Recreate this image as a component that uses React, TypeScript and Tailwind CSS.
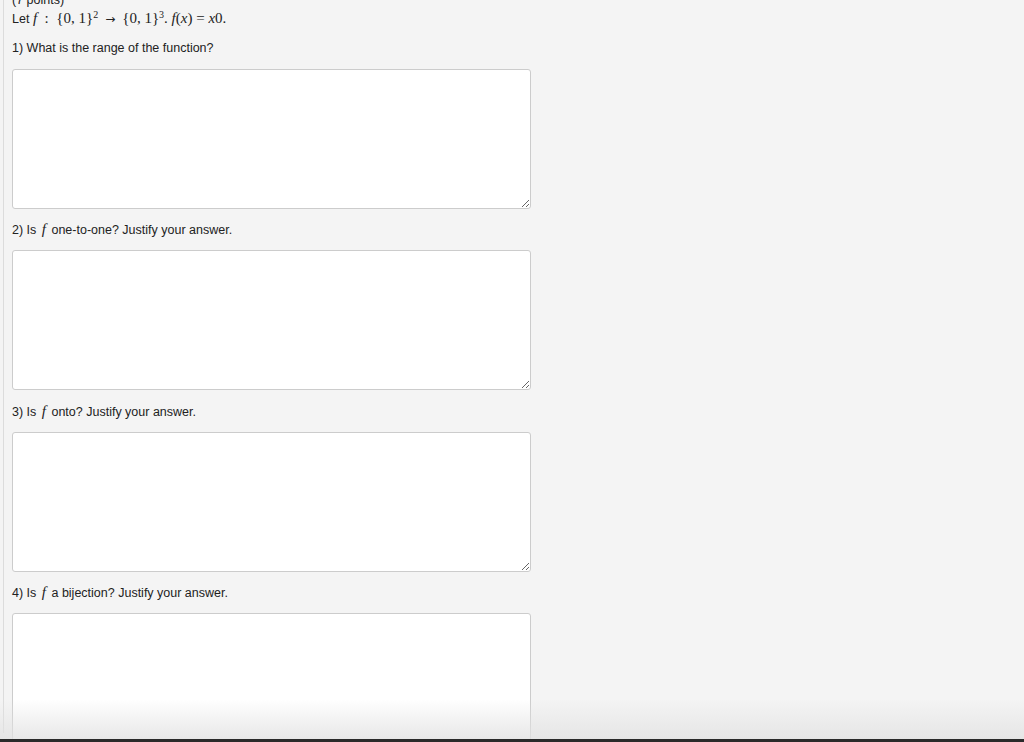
import React from 'react';

const questions = [
  { n: 1, before: 'What is the range of the function?', f: false, after: '', gap: 'mt-[12px]' },
  { n: 2, before: 'Is', f: true, after: 'one-to-one? Justify your answer.', gap: 'mt-[11px]' },
  { n: 3, before: 'Is', f: true, after: 'onto? Justify your answer.', gap: 'mt-[12px]' },
  { n: 4, before: 'Is', f: true, after: 'a bijection? Justify your answer.', gap: 'mt-[11px]' },
];

const serif = { fontFamily: '"Liberation Serif", "DejaVu Serif", serif' };

function F() {
  return (
    <span className="mx-[2px] italic text-[15px]" style={serif}>
      f
    </span>
  );
}

export default function App() {
  return (
    <div className="relative h-[742px] w-[1024px] overflow-hidden bg-[#f4f4f4] text-[#222]" style={{ fontFamily: '"Liberation Sans", Arial, sans-serif' }}>
      <div className="ml-[3px] h-full border-l border-[#dcdcdc] pl-[8px]">
        <div className="-mt-[9px] h-[18px] text-[12.5px] leading-[18px]">(7 points)</div>
        <div className="h-[18px] whitespace-nowrap text-[12.5px] leading-[18px]">
          Let{' '}
          <span className="text-[15px]" style={serif}>
            <i>f</i>&nbsp;&nbsp;:&nbsp;&nbsp;{'{'}0, 1{'}'}<sup className="text-[10px]">2</sup>
            <span className="mx-[7px] text-[12px]" style={{ fontFamily: '"DejaVu Sans", sans-serif' }}>→</span>
            {'{'}0, 1{'}'}<sup className="text-[10px]">3</sup>.&nbsp;<i>f</i>(<i>x</i>)&nbsp;=&nbsp;<i>x</i>0.
          </span>
        </div>
        {questions.map((q) => (
          <div key={q.n} className={q.gap}>
            <div className="h-[18px] text-[12.5px] leading-[18px]">
              {q.n}) {q.before}
              {q.f && (
                <>
                  {' '}
                  <F /> {q.after}
                </>
              )}
            </div>
            <textarea className="mt-[12px] block h-[140px] w-[519px] rounded-[3px] border border-[#cccccc] bg-white" />
          </div>
        ))}
      </div>
      <div className="pointer-events-none absolute bottom-[3px] left-0 h-[40px] w-full bg-gradient-to-b from-transparent to-[#e2e2e2]/80" />
      <div className="absolute bottom-0 left-0 h-[3px] w-full bg-[#2a2a2a]" />
    </div>
  );
}
